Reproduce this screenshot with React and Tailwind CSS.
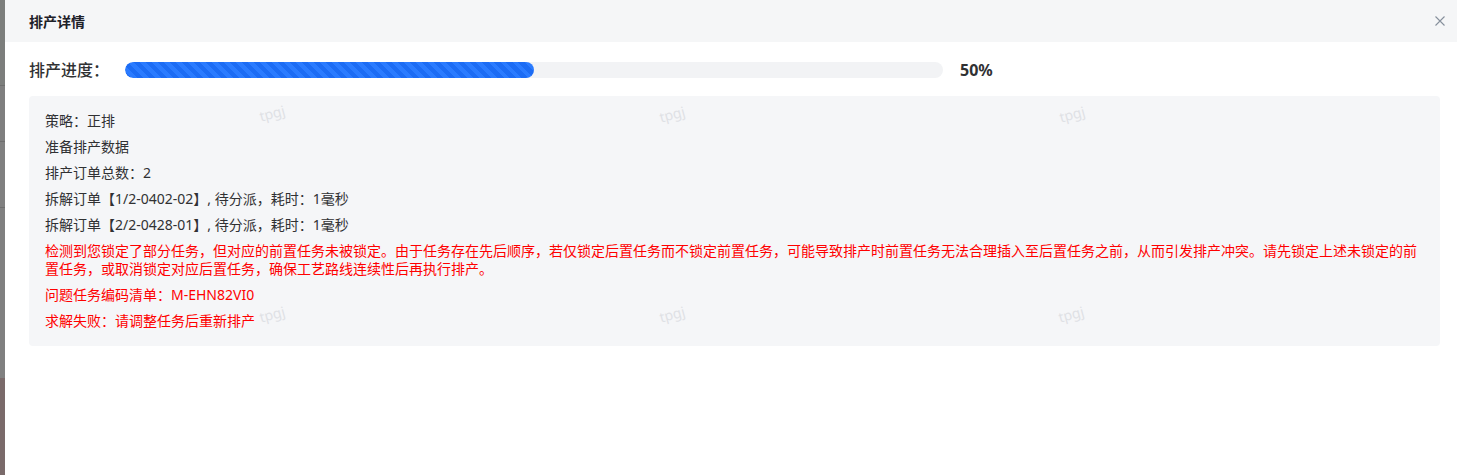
import React from 'react';

const LINES = [
  { text: '策略：正排' },
  { text: '准备排产数据' },
  { text: '排产订单总数：2' },
  { text: '拆解订单【1/2-0402-02】, 待分派，耗时：1毫秒' },
  { text: '拆解订单【2/2-0428-01】, 待分派，耗时：1毫秒' },
  {
    text: '检测到您锁定了部分任务，但对应的前置任务未被锁定。由于任务存在先后顺序，若仅锁定后置任务而不锁定前置任务，可能导致排产时前置任务无法合理插入至后置任务之前，从而引发排产冲突。请先锁定上述未锁定的前置任务，或取消锁定对应后置任务，确保工艺路线连续性后再执行排产。',
    error: true,
  },
  { text: '问题任务编码清单：M-EHN82VI0', error: true },
  { text: '求解失败：请调整任务后重新排产', error: true },
];

// watermark spots over the log box
const MARKS = [
  [272, 113], [672, 114], [1072, 114],
  [272, 314], [672, 314], [1071, 314],
];

const progress = 50;

export default function App() {
  return (
    <div
      className="relative flex w-[1457px] h-[475px] overflow-hidden bg-white"
      style={{ fontFamily: '"Noto Sans", "Noto Sans CJK SC", sans-serif' }}
    >
      {/* Backdrop strip */}
      <div className="w-[5px] shrink-0 flex flex-col bg-[#808080]">
        <div className="h-[85px] bg-[#7c7e7c]" />
        <div className="h-px bg-[#6e6e6e]" />
        <div className="h-[55px] bg-[#7f7f7f]" />
        <div className="h-px bg-[#6e6e6e]" />
        <div className="h-[65px] bg-[#808080]" />
        <div className="h-px bg-[#6e6e6e]" />
        <div className="h-[170px] bg-[#808080]" />
        <div className="flex-1 bg-[#7a6a6a]" />
      </div>

      {/* Modal */}
      <div className="flex-1 flex flex-col bg-white">
        <div className="h-[42px] shrink-0 flex items-center justify-between pl-6 pr-[12px] bg-[#f5f6f7]">
          <span className="text-[14px] font-bold text-[#1d2129]">排产详情</span>
          <svg width="10" height="10" viewBox="0 0 10 10" className="text-[#86909c]">
            <path d="M0.5 0.5 L9.5 9.5 M9.5 0.5 L0.5 9.5" stroke="currentColor" strokeWidth="1.1" fill="none" />
          </svg>
        </div>

        <div className="pl-6 pr-[17px]">
          <div className="mt-4 h-6 flex items-center">
            <span className="w-[96px] shrink-0 text-[16px] font-medium text-[#303133]">排产进度：</span>
            <div className="w-[818px] h-4 rounded-full bg-[#f2f3f5] overflow-hidden">
              <div
                className="h-full rounded-full bg-[repeating-linear-gradient(45deg,#1c6cf4_0px,#1c6cf4_4.5px,#2a7bff_4.5px,#2a7bff_8.5px)]"
                style={{ width: `${progress}%` }}
              />
            </div>
            <span className="ml-[17px] text-[16px] font-bold text-[#303133]">{progress}%</span>
          </div>

          <div className="mt-[14px] rounded bg-[#f5f6f8] p-4 flex flex-col gap-2">
            {LINES.map((l, i) => (
              <div
                key={i}
                className={`text-[14px] leading-[18px] ${l.error ? 'text-[#ff0000]' : 'text-[#303133]'}`}
              >
                {l.text}
              </div>
            ))}
          </div>
        </div>
      </div>

      {/* Watermarks */}
      {MARKS.map(([x, y], i) => (
        <span
          key={i}
          className="absolute -translate-x-1/2 -translate-y-1/2 -rotate-[15deg] text-[14px] text-[#dfe1e5] pointer-events-none select-none"
          style={{ left: x, top: y }}
        >
          tpgj
        </span>
      ))}
    </div>
  );
}
